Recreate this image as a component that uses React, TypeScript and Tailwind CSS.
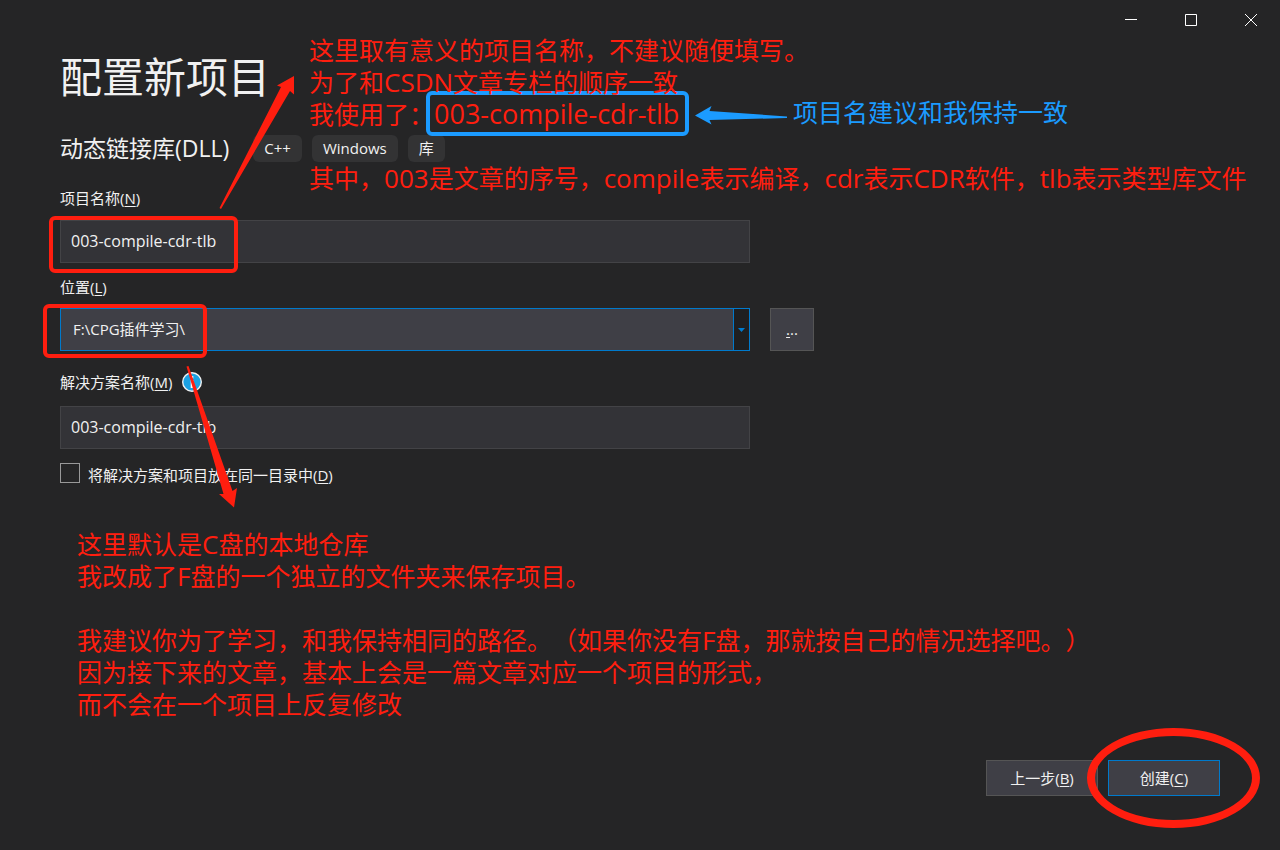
import { Fragment } from "react";
import type { ReactNode } from "react";

const RED = "#ff1e0f";
const BLUE = "#1b9bff";

const PROJECT_NAME = "003-compile-cdr-tlb";

const TOP_NOTE = [
  "这里取有意义的项目名称，不建议随便填写。",
  "为了和CSDN文章专栏的顺序一致",
  `我使用了：${PROJECT_NAME}`,
  "",
  "其中，003是文章的序号，compile表示编译，cdr表示CDR软件，tlb表示类型库文件",
];

const BOTTOM_NOTE = [
  "这里默认是C盘的本地仓库",
  "我改成了F盘的一个独立的文件夹来保存项目。",
  "",
  "我建议你为了学习，和我保持相同的路径。（如果你没有F盘，那就按自己的情况选择吧。）",
  "因为接下来的文章，基本上会是一篇文章对应一个项目的形式，",
  "而不会在一个项目上反复修改",
];

/* Latin runs are set slightly larger than the Chinese text around them. */
function NoteLine({ text }: { text: string }) {
  return (
    <p className="h-8">
      {text.split(/([A-Za-z0-9-]+)/).map((part, i) =>
        i % 2 ? (
          <span key={i} className={part === PROJECT_NAME ? "text-[27px]" : "text-[26px]"}>
            {part}
          </span>
        ) : (
          <Fragment key={i}>{part}</Fragment>
        ),
      )}
    </p>
  );
}

function Key({ children }: { children: string }) {
  return (
    <>
      (<span className="underline underline-offset-2">{children}</span>)
    </>
  );
}

function Tag({ children }: { children: ReactNode }) {
  return (
    <li className="rounded-md bg-[#333334] px-[11px] text-[15px] leading-[27px]">{children}</li>
  );
}

function WindowControls() {
  const button = "flex h-10 w-[60px] items-center justify-center hover:bg-white/10";
  return (
    <div className="flex justify-end">
      <button type="button" aria-label="最小化" className={button}>
        <svg width="16" height="16" viewBox="0 0 16 16" stroke="#fff" fill="none">
          <path d="M3 7.5h12" />
        </svg>
      </button>
      <button type="button" aria-label="最大化" className={button}>
        <svg width="16" height="16" viewBox="0 0 16 16" stroke="#fff" fill="none">
          <path d="M3.5 2.5h11v11h-11z" />
        </svg>
      </button>
      <button type="button" aria-label="关闭" className={button}>
        <svg width="16" height="16" viewBox="0 0 16 16" stroke="#fff" fill="none">
          <path d="M3 2l12 12M15 2L3 14" />
        </svg>
      </button>
    </div>
  );
}

export default function App() {
  return (
    <div
      lang="zh-CN"
      className="relative flex min-h-screen flex-col overflow-hidden bg-[#252526] font-['Open_Sans','Noto_Sans_CJK_SC',sans-serif] text-[15px] text-[#f1f1f1] [text-spacing-trim:space-all]"
    >
      <WindowControls />

      <main className="px-[60px]">
        <h1 className="mt-[9px] text-[42px] leading-[56px]">配置新项目</h1>

        <div className="mt-[30px] flex items-center gap-6">
          <h2 className="text-[23px] leading-[27px]">动态链接库(DLL)</h2>
          <ul className="flex gap-[10px]">
            <Tag>C++</Tag>
            <Tag>Windows</Tag>
            <Tag>库</Tag>
          </ul>
        </div>

        <form className="mt-[26px] max-w-[690px]">
          <label htmlFor="project" className="block leading-5">
            项目名称
            <Key>N</Key>
          </label>
          <div className="relative mt-3">
            <input
              id="project"
              type="text"
              defaultValue={PROJECT_NAME}
              className="block h-[43px] w-full border border-[#434346] bg-[#333337] px-[10px] pb-0.5 text-[16px] outline-none"
            />
            <div className="pointer-events-none absolute -left-[11px] -top-1 h-[57px] w-[189px] rounded-md border-4 border-[#ff1e0f]" />
          </div>

          <label htmlFor="location" className="mt-[14px] block leading-5">
            位置
            <Key>L</Key>
          </label>
          <div className="relative mt-[11px] flex">
            <div className="flex h-[43px] w-full shrink-0 border border-[#007acc] bg-[#3f3f46]">
              <input
                id="location"
                type="text"
                defaultValue="F:\CPG插件学习\"
                className="min-w-0 flex-1 bg-transparent px-3 outline-none"
              />
              <button
                type="button"
                aria-label="最近的位置"
                className="flex w-4 items-center justify-center border-l border-[#007acc] bg-[#1f1f20]"
              >
                <svg width="8" height="4" viewBox="0 0 8 4" fill="#007acc">
                  <path d="M0 0h7L3.5 4z" />
                </svg>
              </button>
            </div>
            <button
              type="button"
              aria-label="浏览"
              className="ml-5 h-[43px] w-11 shrink-0 border border-[#555555] bg-[#3f3f46]"
            >
              <span className="underline underline-offset-2">.</span>..
            </button>
            <div className="pointer-events-none absolute -left-[17px] -top-1 h-[54px] w-[164px] rounded-md border-4 border-[#ff1e0f]" />
          </div>

          <div className="mt-[21px] flex items-center gap-[10px]">
            <label htmlFor="solution" className="leading-5">
              解决方案名称
              <Key>M</Key>
            </label>
            <svg width="20" height="20" viewBox="0 0 20 20" role="img" aria-label="信息">
              <circle cx="10" cy="10" r="9.3" fill="#1ba1e2" stroke="#f1f1f1" strokeWidth="1.4" />
              <path d="M8.7 4h2.6v2.4H8.7zM8.7 8h2.6v8H8.7z" fill="#fff" />
            </svg>
          </div>
          <input
            id="solution"
            type="text"
            defaultValue={PROJECT_NAME}
            className="mt-[14px] block h-[43px] w-full border border-[#434346] bg-[#333337] px-[10px] pb-0.5 text-[16px] outline-none"
          />

          <div className="mt-[14px] flex gap-2">
            <input
              id="same-folder"
              type="checkbox"
              className="size-5 appearance-none border border-[#999999] bg-[#252526] checked:bg-[#007acc]"
            />
            <label htmlFor="same-folder" className="leading-6">
              将解决方案和项目放在同一目录中
              <Key>D</Key>
            </label>
          </div>
        </form>
      </main>

      <footer className="mt-auto flex justify-end gap-[10px] px-[60px] pb-[54px]">
        <button type="button" className="h-9 w-28 border border-[#555555] bg-[#3f3f46]">
          上一步
          <Key>B</Key>
        </button>
        <div className="relative">
          <button type="button" className="h-9 w-28 border border-[#007acc] bg-[#3f3f46]">
            创建
            <Key>C</Key>
          </button>
          <div className="pointer-events-none absolute -left-[21px] -top-8 h-[100px] w-[173px] rounded-[50%] border-8 border-[#ff1e0f]" />
        </div>
      </footer>

      {/* Notes and arrows drawn over the dialog */}
      <div className="pointer-events-none absolute left-[426px] top-[91px] h-[45px] w-[263px] rounded-md border-4 border-[#1b9bff]" />
      <div className="pointer-events-none absolute left-[309px] top-[34px] whitespace-nowrap text-[25px] leading-8 text-[#ff1e0f]">
        {TOP_NOTE.map((line, i) => (
          <NoteLine key={i} text={line} />
        ))}
      </div>
      <p className="pointer-events-none absolute left-[793px] top-24 whitespace-nowrap text-[25px] leading-8 text-[#1b9bff]">
        项目名建议和我保持一致
      </p>
      <div className="pointer-events-none absolute left-[77px] top-[528px] whitespace-nowrap text-[25px] leading-8 text-[#ff1e0f]">
        {BOTTOM_NOTE.map((line, i) => (
          <NoteLine key={i} text={line} />
        ))}
      </div>
      <svg
        className="pointer-events-none absolute left-0 top-0"
        width="800"
        height="520"
        viewBox="0 0 800 520"
        aria-hidden="true"
      >
        <path d="M219.5 208L281 87 277 85.500 294 76V94.500L290 91 221 209z" fill={RED} />
        <path d="M186.500 366.500L188.500 366 232.500 491 237 488 234 507.500 219 494 223.500 494z" fill={RED} />
        <path d="M695 115.500L711.500 106 709.500 111 787 116.500V118L709.500 120 711.500 124.500z" fill={BLUE} />
      </svg>
    </div>
  );
}
